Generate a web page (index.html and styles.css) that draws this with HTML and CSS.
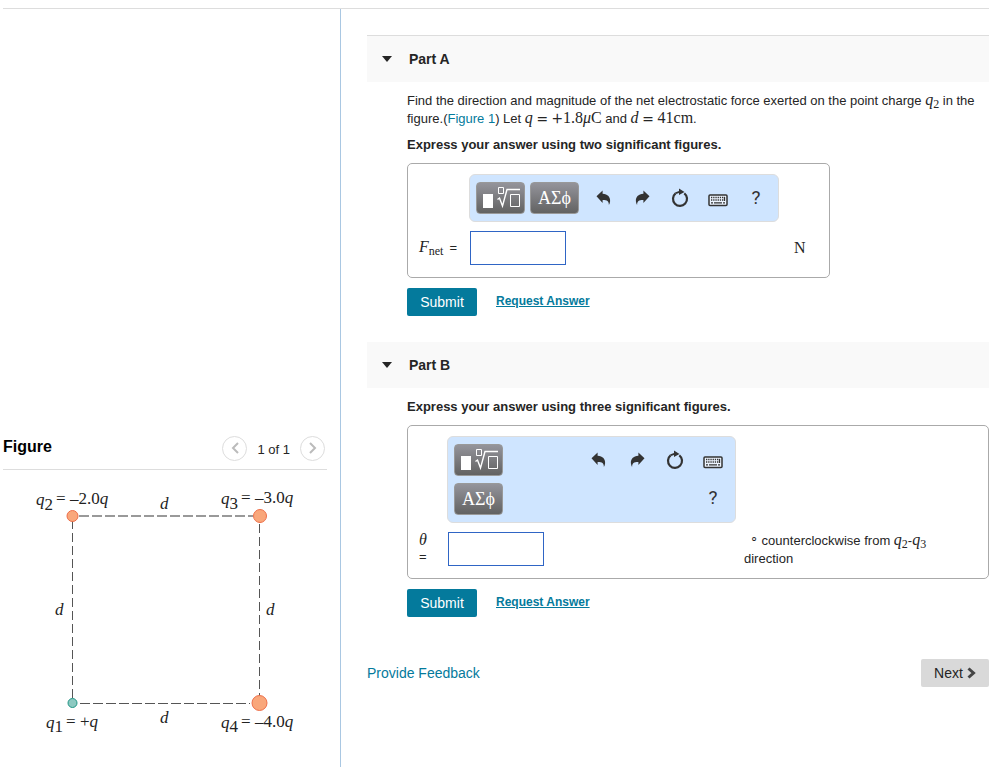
FILE: index.html
```html
<!DOCTYPE html>
<html lang="en">
<head>
<meta charset="utf-8">
<meta name="viewport" content="width=device-width, initial-scale=1">
<title>Electrostatic force problem</title>
<link rel="stylesheet" href="styles.css">
</head>
<body>
<svg class="sprite" aria-hidden="true">
  <symbol id="undo" viewBox="0 0 16 16"><path d="M.5 6.200 6.600.5v3.300c5.200.2 7.900 3.500 7.500 7.500-.1 1.400-.5 2.600-1.200 3.700.1-3.700-2-5-6.300-4.900v3z"/></symbol>
  <symbol id="redo" viewBox="0 0 16 16"><path d="M15.500 6.200 9.400.5v3.300c-5.200.2-7.900 3.500-7.500 7.500.1 1.400.5 2.600 1.200 3.700-.1-3.700 2-5 6.300-4.900v3z"/></symbol>
  <symbol id="reset" viewBox="0 0 18 20"><path d="M13.300 5.300A7 7 0 1 1 4.600 5.400" fill="none" stroke="currentColor" stroke-width="2.200"/><path d="M8 .5 13.500 4 8 7V5L5 6 4 4.500 8 3z"/></symbol>
  <symbol id="keyboard" viewBox="0 0 20 13"><rect x="1" y="1" width="18" height="10.500" rx="1" fill="#eef5ff" stroke="currentColor" stroke-width="1.500"/><path d="M3 3.500h14M3 6h14" fill="none" stroke="currentColor" stroke-width="1.300" stroke-dasharray="1.300 .9"/><path d="M3 8.900h2M6 8.900h8M15 8.900h2M16.500 3v4" fill="none" stroke="currentColor" stroke-width="1.300"/></symbol>
  <symbol id="template" viewBox="0 0 40 24"><path d="M2 8h10v14H2z"/><path d="M17.500 1.500h5v6h-5zM29.500 8.500h9v12h-9z" fill="none" stroke="currentColor"/><path d="M16.500 13.500 18.500 12l3 8L26 3.500h13" fill="none" stroke="currentColor" stroke-width="1.400"/></symbol>
</svg>

<div class="page">
  <aside class="figure-pane">
    <header class="figure-head">
      <h2 class="figure-title">Figure</h2>
      <nav class="pager" aria-label="Figures">
        <button class="round" type="button" aria-label="Previous figure"><svg viewBox="0 0 10 14" width="10" height="14"><path d="M8 2 3 7l5 5"/></svg></button>
        <span class="count">1 of 1</span>
        <button class="round" type="button" aria-label="Next figure"><svg viewBox="0 0 10 14" width="10" height="14"><path d="m2 2 5 5-5 5"/></svg></button>
      </nav>
    </header>
    <svg class="diagram" viewBox="3 480 324 260" role="img" aria-label="Four charges at the corners of a square with side d">
      <g class="edges">
        <path class="edge-top" d="M79 516H253" stroke-dasharray="10 3"/>
        <path d="M80 703.500h170" stroke-dasharray="10 3"/>
        <path d="M72.500 520v178M259.500 524v172" stroke-dasharray="9 4"/>
      </g>
      <circle class="neg" cx="72.500" cy="516" r="5.500"/>
      <circle class="neg" cx="260" cy="516" r="6.500"/>
      <circle class="neg" cx="259.500" cy="703" r="7.500"/>
      <circle class="pos" cx="72.500" cy="703" r="4.500"/>
      <g class="labels">
        <text x="36" y="505"><tspan class="it">q</tspan><tspan dy="5">2</tspan></text>
        <text x="56" y="504">=</text><text x="70" y="504">–2.0<tspan class="it">q</tspan></text>
        <text x="221" y="504"><tspan class="it">q</tspan><tspan dy="5">3</tspan></text>
        <text x="241" y="503">=</text><text x="255" y="503">–3.0<tspan class="it">q</tspan></text>
        <text x="46" y="728"><tspan class="it">q</tspan><tspan dy="4">1</tspan></text>
        <text x="66" y="727">=</text><text x="80" y="727">+<tspan class="it">q</tspan></text>
        <text x="221" y="728"><tspan class="it">q</tspan><tspan dy="4">4</tspan></text>
        <text x="241" y="727">=</text><text x="255" y="727">–4.0<tspan class="it">q</tspan></text>
        <text class="it" x="160" y="509">d</text>
        <text class="it" x="160" y="723">d</text>
        <text class="it" x="55" y="615">d</text>
        <text class="it" x="266" y="615">d</text>
      </g>
    </svg>
  </aside>

  <main class="work">
    <section class="part">
      <h2 class="part-head part-head-first"><span class="caret"></span>Part A</h2>
      <div class="part-body">
        <p class="prompt">Find the direction and magnitude of the net electrostatic force exerted on the point charge <span class="math"><i>q</i><sub>2</sub></span> in the figure.(<a href="#figure">Figure 1</a>) Let <span class="math"><i>q</i> <span class="op">=</span> <span class="op">+</span>1.8<i>μ</i>C</span> and <span class="math"><i>d</i> <span class="op">=</span> 41cm</span>.</p>
        <p class="instruction">Express your answer using two significant figures.</p>
        <div class="answer answer-a">
          <div class="toolbar">
            <div class="keys">
              <button class="key" type="button" aria-label="Templates"><svg width="40" height="24"><use href="#template"/></svg></button>
              <button class="key" type="button">ΑΣϕ</button>
            </div>
            <div class="tools">
              <button class="tool" type="button" aria-label="Undo"><svg width="16" height="16"><use href="#undo"/></svg></button>
              <button class="tool" type="button" aria-label="Redo"><svg width="16" height="16"><use href="#redo"/></svg></button>
              <button class="tool" type="button" aria-label="Reset"><svg width="18" height="20"><use href="#reset"/></svg></button>
              <button class="tool keyboard" type="button" aria-label="Keyboard shortcuts"><svg width="20" height="13"><use href="#keyboard"/></svg></button>
              <button class="tool help" type="button">?</button>
            </div>
          </div>
          <label class="symbol" for="force"><span class="math"><i>F</i><sub>net</sub></span><span>=</span></label>
          <input class="entry" id="force" type="text">
          <span class="unit math">N</span>
        </div>
        <div class="actions"><button class="submit" type="button">Submit</button><a class="request" href="#answer-a">Request Answer</a></div>
      </div>
    </section>

    <section class="part">
      <h2 class="part-head"><span class="caret"></span>Part B</h2>
      <div class="part-body">
        <p class="instruction">Express your answer using three significant figures.</p>
        <div class="answer answer-b">
          <div class="toolbar">
            <div class="keys">
              <button class="key" type="button" aria-label="Templates"><svg width="40" height="24"><use href="#template"/></svg></button>
              <button class="key" type="button">ΑΣϕ</button>
            </div>
            <div class="tools">
              <button class="tool" type="button" aria-label="Undo"><svg width="16" height="16"><use href="#undo"/></svg></button>
              <button class="tool" type="button" aria-label="Redo"><svg width="16" height="16"><use href="#redo"/></svg></button>
              <button class="tool" type="button" aria-label="Reset"><svg width="18" height="20"><use href="#reset"/></svg></button>
              <button class="tool keyboard" type="button" aria-label="Keyboard shortcuts"><svg width="20" height="13"><use href="#keyboard"/></svg></button>
              <button class="tool help" type="button">?</button>
            </div>
          </div>
          <label class="symbol" for="angle"><span class="math"><i>θ</i></span><span>=</span></label>
          <input class="entry" id="angle" type="text">
          <span class="unit"><span class="degree">∘</span> counterclockwise from <span class="math"><i>q</i><sub>2</sub></span>-<span class="math"><i>q</i><sub>3</sub></span> direction</span>
        </div>
        <div class="actions"><button class="submit" type="button">Submit</button><a class="request" href="#answer-b">Request Answer</a></div>
      </div>
    </section>

    <footer class="foot">
      <a class="feedback" href="#feedback">Provide Feedback</a>
      <button class="next" type="button">Next <svg viewBox="0 0 9 12" width="9" height="12"><path d="m1.500 1.500 5 4.500-5 4.500"/></svg></button>
    </footer>
  </main>
</div>
</body>
</html>
```
FILE: styles.css
```css
* { box-sizing: border-box; }

body {
  margin: 0;
  background: #fff;
  color: #252525;
  font: 13px/18px "Liberation Sans", Arial, sans-serif;
}

h2, p { margin: 0; }
button, input { font-family: inherit; }
button { border: 0; padding: 0; background: none; color: inherit; cursor: pointer; }
a { color: #047a9c; text-decoration: none; }
.sprite { display: none; }

.page {
  display: grid;
  grid-template-columns: 338px minmax(0, 1fr);
  min-height: calc(100vh - 8px);
  margin: 8px 18px 0 3px;
  border-top: 1px solid #ddd;
}

/* Figure pane */
.figure-pane {
  display: flex;
  flex-direction: column;
  justify-content: flex-end;
  padding: 0 13px 27px 0;
  border-right: 1px solid #a9c7e2;
}
.figure-head {
  display: flex;
  justify-content: space-between;
  align-items: center;
  height: 43px;
  margin-bottom: 10px;
  padding-right: 2px;
  border-bottom: 1px solid #ddd;
}
.figure-title { color: #000; font-size: 16px; line-height: 18px; padding-bottom: 2px; }
.pager { display: flex; align-items: center; gap: 10px; }
.count { padding-top: 4px; }
.round {
  display: grid;
  place-items: center;
  width: 25px;
  height: 25px;
  border: 1px solid #ddd;
  border-radius: 50%;
}
.round path { fill: none; stroke: #bbb; stroke-width: 2; }
.diagram { display: block; width: 100%; }
.edges path { fill: none; stroke: #555; stroke-width: 1; }
.edges .edge-top { stroke: #999; stroke-width: 2; }
.neg { fill: #f9a77b; stroke: #ee6f49; }
.pos { fill: #8cc9c1; stroke: #219585; }
.labels { font: 17px "Liberation Serif", serif; fill: #222; }
.it { font-style: italic; }

/* Problem parts */
.work { padding: 26px 0 0 26px; }
.part { margin-bottom: 26px; }
.part-head {
  display: flex;
  align-items: center;
  gap: 17px;
  height: 46px;
  padding-left: 15px;
  background: #f9f9f9;
  font-size: 14px;
  line-height: 18px;
}
.part-head-first { height: 47px; border-top: 1px solid #ddd; }
.caret { border: solid transparent; border-width: 6px 5px 0; border-top-color: #252525; }
.part-body { padding: 10px 0 0 40px; }
.prompt { margin-bottom: 8px; }
.instruction { font-weight: bold; margin-bottom: 9px; }
.math { font-family: "Liberation Serif", serif; font-size: 16px; line-height: 16px; }
.math sub { font-size: 12px; line-height: 0; vertical-align: -3px; }
.op { font-family: "DejaVu Math TeX Gyre", "DejaVu Serif", serif; font-size: 14px; line-height: 0; }

.answer {
  display: grid;
  row-gap: 9px;
  padding: 10px 11px 12px;
  border: 1px solid #aaa;
  border-radius: 5px;
}
.answer-a { grid-template-columns: 50px 310px 1fr; max-width: 423px; }
.answer-b { grid-template-columns: 28px 289px 1fr; }
.toolbar {
  grid-column: 2;
  display: flex;
  padding: 0 3px 0 6px;
  border: 1px solid #ddd;
  border-radius: 6px;
  background: #cfe5ff;
}
.keys { display: flex; gap: 5px; padding: 7px 0; }
.answer-b .keys { flex-direction: column; gap: 7px; }
.key {
  display: grid;
  place-items: center;
  width: 49px;
  height: 32px;
  border: 1px solid #999;
  border-radius: 4px;
  background: linear-gradient(#94949b, #626262);
  color: #fff;
  font: 18px/24px "Liberation Serif", serif;
}
.key svg { fill: currentColor; }
.tools { display: flex; flex-wrap: wrap; justify-content: flex-end; align-content: flex-start; width: 190px; margin-left: auto; padding-top: 4px; }
.answer-b .tools { width: 152px; }
.tool { display: grid; place-items: center; width: 38px; height: 38px; color: #333; }
.tool svg { fill: currentColor; }
.tool.keyboard { padding-top: 4px; }
.help { font: 19px/20px Roboto, sans-serif; }
.symbol { grid-column: 1; display: flex; }
.answer-a .symbol { align-self: center; align-items: baseline; gap: 6px; }
.answer-b .symbol { flex-direction: column; }
.entry { width: 96px; height: 34px; margin-left: 1px; padding: 0 6px; border: 1px solid #2f65c5; background: #fff; font-size: 14px; }
.unit { padding-left: 8px; }
.answer-a .unit { padding-left: 15px; align-self: center; }
.answer-b .symbol, .answer-b .unit { height: 34px; }
.degree { margin-left: 6px; vertical-align: 3px; line-height: 0; }

.actions { display: flex; align-items: center; gap: 19px; margin-top: 10px; }
.submit { width: 70px; height: 28px; border-radius: 2px; background: #047a9c; color: #fff; font-size: 14px; }
.request { padding-bottom: 3px; font-size: 12px; font-weight: bold; text-decoration: underline; }

.foot { display: flex; justify-content: space-between; align-items: center; margin-top: 42px; font-size: 14px; }
.next { display: flex; align-items: center; justify-content: center; gap: 4px; width: 68px; height: 28px; border-radius: 2px; background: #d9d9d9; font-size: 14px; }
.next path { fill: none; stroke: #444; stroke-width: 3; }
```
